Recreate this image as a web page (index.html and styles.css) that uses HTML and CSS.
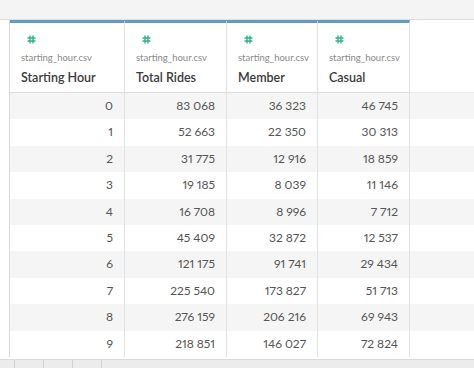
FILE: index.html
```html
<!DOCTYPE html>
<html lang="en">
<head>
    <meta charset="UTF-8">
    <title>starting_hour.csv</title>
    <link rel="stylesheet" href="styles.css">
</head>
<body>
    <div class="toolbar"></div>

    <div class="sheet">
        <!-- Column headers -->
        <div class="row header-row">
            <div class="head-cell">
                <svg class="type-icon" viewBox="0 0 9 9"><path d="M3 0.5V8.5M6 0.5V8.5M0.5 3H8.5M0.5 6H8.5"/></svg>
                <span class="source">starting_hour.csv</span>
                <span class="field">Starting Hour</span>
            </div>
            <div class="head-cell">
                <svg class="type-icon" viewBox="0 0 9 9"><path d="M3 0.5V8.5M6 0.5V8.5M0.5 3H8.5M0.5 6H8.5"/></svg>
                <span class="source">starting_hour.csv</span>
                <span class="field">Total Rides</span>
            </div>
            <div class="head-cell">
                <svg class="type-icon" viewBox="0 0 9 9"><path d="M3 0.5V8.5M6 0.5V8.5M0.5 3H8.5M0.5 6H8.5"/></svg>
                <span class="source">starting_hour.csv</span>
                <span class="field">Member</span>
            </div>
            <div class="head-cell">
                <svg class="type-icon" viewBox="0 0 9 9"><path d="M3 0.5V8.5M6 0.5V8.5M0.5 3H8.5M0.5 6H8.5"/></svg>
                <span class="source">starting_hour.csv</span>
                <span class="field">Casual</span>
            </div>
            <div class="filler"></div>
        </div>

        <div id="rows"></div>
    </div>

    <!-- Sheet tabs strip -->
    <div class="tabs">
        <span class="tab tab-small"></span>
        <span class="tab"></span>
        <span class="tab"></span>
        <span class="tab"></span>
        <span class="tab-rest"></span>
    </div>

    <script>
        const data = [
            [0, 83068, 36323, 46745],
            [1, 52663, 22350, 30313],
            [2, 31775, 12916, 18859],
            [3, 19185, 8039, 11146],
            [4, 16708, 8996, 7712],
            [5, 45409, 32872, 12537],
            [6, 121175, 91741, 29434],
            [7, 225540, 173827, 51713],
            [8, 276159, 206216, 69943],
            [9, 218851, 146027, 72824]
        ];

        // group thousands with a narrow space
        function fmt(n) {
            return String(n).replace(/\B(?=(\d{3})+(?!\d))/g, '\u202F');
        }

        const rows = document.getElementById('rows');
        data.forEach(function (values, i) {
            const row = document.createElement('div');
            row.className = 'row data-row' + (i % 2 === 0 ? ' striped' : '');
            values.forEach(function (v) {
                const cell = document.createElement('div');
                cell.className = 'cell';
                cell.textContent = fmt(v);
                row.appendChild(cell);
            });
            const filler = document.createElement('div');
            filler.className = 'filler';
            row.appendChild(filler);
            rows.appendChild(row);
        });
    </script>
</body>
</html>
```

FILE: styles.css
```css
body {
    margin: 0;
    background: #fff;
    font-family: Lato, "Open Sans", sans-serif;
    color: #333;
    height: 368px;
    overflow: hidden;
}

/* Top strip */
.toolbar {
    height: 19px;
    background: #f4f4f4;
    border-bottom: 1px solid #dedede;
}

/* Data grid */
.sheet {
    margin-left: 9px;
    border-left: 1px solid #d9d9d9;
}

.row {
    display: grid;
    grid-template-columns: 115px 102px 91px 92px 1fr;
}

.head-cell {
    border-top: 3px solid #5f9dc2;
    border-right: 1px solid #e2e2e2;
    border-bottom: 1px solid #dcdcdc;
    height: 69px;
    display: flex;
    flex-direction: column;
    padding-left: 11px;
}

.head-cell:last-of-type {
    border-right-color: #dcdcdc;
}

.header-row .filler {
    border-bottom: 1px solid #ececec;
}

.type-icon {
    width: 9px;
    height: 9px;
    margin-top: 12px;
    margin-left: 6px;
    margin-bottom: 2px;
    fill: none;
    stroke: #2db38a;
    stroke-width: 1.4;
}

.source {
    font-size: 9.5px;
    color: #8a8a8a;
    margin-top: 5.5px;
    line-height: 11px;
}

.field {
    font-size: 12.5px;
    font-weight: 600;
    color: #3a3a3a;
    margin-top: 7px;
    line-height: 15px;
}

.data-row {
    height: 26.4px;
}

.striped {
    background: #f5f5f5;
}

.cell {
    border-right: 1px solid #e2e2e2;
    text-align: right;
    padding-right: 11px;
    font-size: 12px;
    color: #555;
    line-height: 26.4px;
    font-variant-numeric: proportional-nums;
}

/* Bottom tabs */
.tabs {
    display: flex;
    height: 10px;
    margin-top: 2px;
    background: #ececec;
    border-top: 1px solid #dadada;
}

.tab {
    width: 28px;
    border-right: 1px solid #d2d2d2;
}

.tab-small {
    width: 14px;
}

.tab-rest {
    flex: 1;
}
```
